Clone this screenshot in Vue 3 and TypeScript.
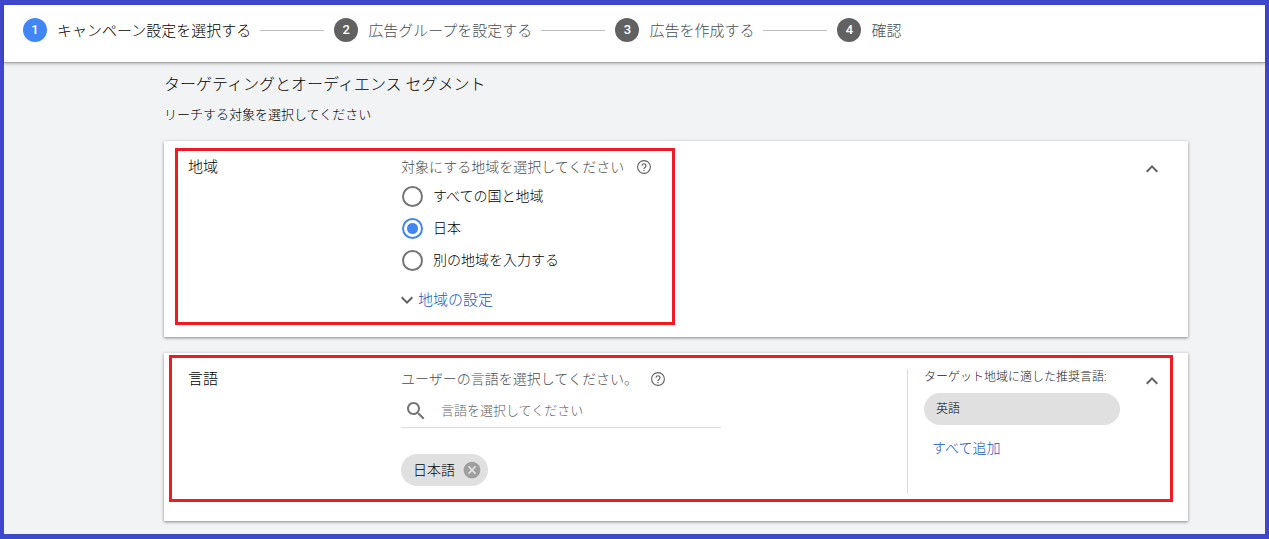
<script setup lang="ts">
import { ref } from 'vue'

interface Step {
  number: number
  label: string
}

const steps: Step[] = [
  { number: 1, label: 'キャンペーン設定を選択する' },
  { number: 2, label: '広告グループを設定する' },
  { number: 3, label: '広告を作成する' },
  { number: 4, label: '確認' },
]
const currentStep = ref(1)

const regions = [
  { value: 'all', label: 'すべての国と地域' },
  { value: 'japan', label: '日本' },
  { value: 'other', label: '別の地域を入力する' },
]
const region = ref('japan')

const query = ref('')
const languages = ref<string[]>(['日本語'])
const suggested = ref<string[]>(['英語'])

function removeLanguage(name: string) {
  languages.value = languages.value.filter((l) => l !== name)
}
function addLanguage(name: string) {
  if (!languages.value.includes(name)) languages.value.push(name)
}
function addAll() {
  suggested.value.forEach(addLanguage)
}
</script>

<template>
  <div class="page">
    <header class="header">
      <ol class="steps">
        <li
          v-for="step in steps"
          :key="step.number"
          class="step"
          :class="{ current: step.number === currentStep }"
        >
          <span class="step-number">{{ step.number }}</span>
          <span class="step-label">{{ step.label }}</span>
        </li>
      </ol>
    </header>

    <main class="main">
      <h1 class="title">ターゲティングとオーディエンス セグメント</h1>
      <p class="subtitle">リーチする対象を選択してください</p>

      <section class="card">
        <div class="highlight highlight-region"></div>
        <h2 class="card-label">地域</h2>
        <div class="content">
          <div class="prompt">
            <span id="region-prompt">対象にする地域を選択してください</span>
            <button class="icon-button" type="button" aria-label="ヘルプ">
              <svg class="help" viewBox="0 0 14 14">
                <circle cx="7" cy="7" r="6.400" />
                <path d="M5 5.700a2 2 0 1 1 3.200 1.600C7.400 7.900 7 8.100 7 9M7 10v1.200" />
              </svg>
            </button>
          </div>
          <div class="radios" role="radiogroup" aria-labelledby="region-prompt">
            <label v-for="item in regions" :key="item.value" class="radio-row">
              <input v-model="region" class="radio" type="radio" name="region" :value="item.value" />
              <span>{{ item.label }}</span>
            </label>
          </div>
          <button class="settings" type="button">
            <svg class="chevron-small" viewBox="6 8 12 8">
              <path d="M16.590 8.590L12 13.170 7.410 8.590 6 10l6 6 6-6z" />
            </svg>
            <span>地域の設定</span>
          </button>
        </div>
        <button class="icon-button" type="button" aria-label="閉じる">
          <svg class="chevron" viewBox="0 0 24 24">
            <path d="M12 8l-6 6 1.410 1.410L12 10.830l4.590 4.580L18 14z" />
          </svg>
        </button>
      </section>

      <section class="card">
        <div class="highlight highlight-language"></div>
        <h2 class="card-label">言語</h2>
        <div class="content">
          <div class="prompt">
            <label for="language-search">ユーザーの言語を選択してください。</label>
            <button class="icon-button" type="button" aria-label="ヘルプ">
              <svg class="help" viewBox="0 0 14 14">
                <circle cx="7" cy="7" r="6.400" />
                <path d="M5 5.700a2 2 0 1 1 3.200 1.600C7.400 7.900 7 8.100 7 9M7 10v1.200" />
              </svg>
            </button>
          </div>
          <div class="search">
            <svg class="search-icon" viewBox="0 0 24 24">
              <path d="M15.500 14h-.79l-.28-.27C15.410 12.590 16 11.110 16 9.500 16 5.910 13.090 3 9.500 3S3 5.910 3 9.500 5.910 16 9.500 16c1.610 0 3.090-.59 4.230-1.570l.27.28v.79l5 4.990L20.490 19l-4.990-5zm-6 0C7.010 14 5 11.990 5 9.500S7.010 5 9.500 5 14 7.010 14 9.500 11.990 14 9.500 14z" />
            </svg>
            <input
              id="language-search"
              v-model="query"
              class="search-input"
              type="text"
              placeholder="言語を選択してください"
            />
          </div>
          <div class="chips">
            <span v-for="name in languages" :key="name" class="chip">
              {{ name }}
              <button class="icon-button" type="button" :aria-label="name + 'を削除'" @click="removeLanguage(name)">
                <svg class="cancel" viewBox="0 0 24 24">
                  <path d="M12 2C6.470 2 2 6.470 2 12s4.470 10 10 10 10-4.470 10-10S17.530 2 12 2zm5 13.590L15.590 17 12 13.410 8.410 17 7 15.590 10.590 12 7 8.410 8.410 7 12 10.590 15.590 7 17 8.410 13.410 12 17 15.590z" />
                </svg>
              </button>
            </span>
          </div>
        </div>
        <aside class="side">
          <p class="side-title">ターゲット地域に適した推奨言語:</p>
          <button v-for="name in suggested" :key="name" class="suggestion" type="button" @click="addLanguage(name)">
            {{ name }}
          </button>
          <button class="add-all" type="button" @click="addAll">すべて追加</button>
        </aside>
        <button class="icon-button" type="button" aria-label="閉じる">
          <svg class="chevron" viewBox="0 0 24 24">
            <path d="M12 8l-6 6 1.410 1.410L12 10.830l4.590 4.580L18 14z" />
          </svg>
        </button>
      </section>
    </main>
  </div>
</template>

<style>
body {
  margin: 0;
}
</style>

<style scoped>
.page {
  box-sizing: border-box;
  min-height: 100vh;
  border: solid #3f48cc;
  border-width: 5px 4px;
  background: #f1f3f4;
  color: #000;
  font-family: Roboto, "Noto Sans CJK JP", sans-serif;
  font-weight: 300;
  font-size: 14px;
  line-height: 20px;
}

button,
input {
  font: inherit;
  color: inherit;
}

button {
  padding: 0;
  border: 0;
  background: none;
  cursor: pointer;
}

svg {
  display: block;
  fill: #616161;
}

.header {
  padding: 13px 19px 20px;
  background: #fff;
  box-shadow: 0 1px 0 #a6a8a8, 0 2px 3px rgba(0, 0, 0, 0.25);
}

.steps {
  display: flex;
  margin: 0;
  padding: 0;
  list-style: none;
}

.step {
  display: flex;
  align-items: center;
  gap: 10px;
  height: 24px;
  color: #4a4d51;
  font-size: 15px;
  line-height: 24px;
  white-space: nowrap;
}

.step:not(:last-child)::after {
  content: "";
  width: 64px;
  height: 1px;
  margin: 0 10px 0 -1px;
  background: #bdbdbd;
}

.step-number {
  width: 24px;
  height: 24px;
  border-radius: 50%;
  background: #616161;
  color: #fff;
  font-size: 13px;
  font-weight: 500;
  text-align: center;
}

.step-label {
  padding-top: 2px;
}

.current {
  color: #000;
}

.current .step-number {
  background: #4285f4;
}

.main {
  padding: 11px 77px 13px 160px;
}

.title {
  margin: 0 0 8px;
  font-size: 16px;
  font-weight: 300;
  line-height: 24px;
}

.subtitle {
  margin: 0 0 16px;
  font-size: 13px;
}

.card {
  position: relative;
  display: flex;
  align-items: flex-start;
  margin-bottom: 16px;
  padding: 16px 24px 27px;
  background: #fff;
  box-shadow: 0 1px 3px rgba(0, 0, 0, 0.45);
}

.card:last-child {
  margin-bottom: 0;
}

.card-label {
  flex: 0 0 213px;
  margin: 0;
  font-size: 15px;
  font-weight: 300;
}

.content {
  flex: 1;
}

.prompt {
  display: flex;
  align-items: center;
  gap: 13px;
  margin-bottom: 3px;
  color: #4a4d51;
}

.help {
  width: 14px;
  height: 14px;
  fill: none;
  stroke: #616161;
  stroke-width: 1.1;
}

.radios {
  margin-bottom: 14px;
}

.radio-row {
  display: flex;
  align-items: center;
  gap: 10px;
  width: fit-content;
  height: 32px;
}

.radio {
  appearance: none;
  width: 21px;
  height: 21px;
  margin: 0 0 0 1px;
  border: 2px solid #757575;
  border-radius: 50%;
}

.radio:checked {
  border-color: #4285f4;
  background: radial-gradient(circle, #4285f4 5px, #fff 6px);
}

.settings {
  display: flex;
  align-items: center;
  gap: 5px;
  color: #1258c0;
  font-size: 15px;
}

.chevron-small {
  width: 12px;
  height: 8px;
}

.chevron {
  width: 24px;
  height: 24px;
}

.search {
  display: flex;
  align-items: center;
  gap: 13px;
  box-sizing: border-box;
  max-width: 320px;
  height: 36px;
  margin-bottom: 26px;
  padding: 2px 0 0 3px;
  border-bottom: 1px solid #dcdcdc;
}

.search-icon {
  width: 24px;
  height: 24px;
  fill: #757575;
}

.search-input {
  flex: 1;
  min-width: 0;
  padding: 0;
  border: 0;
  outline: 0;
  background: none;
  font-size: 13px;
}

.search-input::placeholder {
  color: #5f6368;
  opacity: 1;
}

.chips {
  display: flex;
  gap: 8px;
}

.chip {
  display: flex;
  align-items: center;
  gap: 7px;
  height: 32px;
  padding: 0 6px 0 12px;
  border-radius: 16px;
  background: #e0e0e0;
}

.cancel {
  width: 20px;
  height: 20px;
  fill: #9e9e9e;
}

.side {
  display: flex;
  flex-direction: column;
  align-items: flex-start;
  align-self: stretch;
  box-sizing: border-box;
  width: 213px;
  min-height: 125px;
  margin-right: 20px;
  padding-left: 16px;
  border-left: 1px solid #dadce0;
}

.side-title {
  margin: 0 0 8px;
  color: #202124;
  font-size: 12px;
  line-height: 16px;
  white-space: nowrap;
}

.suggestion {
  width: 100%;
  height: 32px;
  margin-bottom: 13px;
  padding: 0 12px;
  border-radius: 16px;
  background: #e0e0e0;
  font-size: 12px;
  text-align: left;
}

.add-all {
  padding: 0 8px;
  color: #1258c0;
}

/* Callout frames drawn over the two settings cards */
.highlight {
  position: absolute;
  box-sizing: border-box;
  border: 3px solid #ed1c24;
  pointer-events: none;
}

.highlight-region {
  top: 7px;
  bottom: 12px;
  left: 11px;
  width: 500px;
}

.highlight-language {
  top: 2px;
  right: 15px;
  bottom: 19px;
  left: 5px;
}
</style>
